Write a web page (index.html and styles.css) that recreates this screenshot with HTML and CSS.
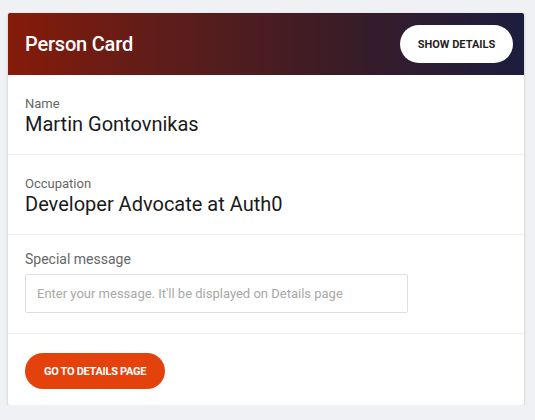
FILE: index.html
```html
<!DOCTYPE html>
<html>
<head>
<meta charset="utf-8">
<link rel="stylesheet" href="styles.css">
</head>
<body>
<div class="card">
  <div class="card-header">
    <h1 class="card-title">Person Card</h1>
    <button class="btn-light">SHOW DETAILS</button>
  </div>
  <div class="section">
    <div class="label">Name</div>
    <div class="value">Martin Gontovnikas</div>
  </div>
  <div class="section">
    <div class="label">Occupation</div>
    <div class="value">Developer Advocate at Auth0</div>
  </div>
  <div class="section section-message">
    <label class="label label-lg">Special message</label>
    <input class="input" type="text" placeholder="Enter your message. It'll be displayed on Details page">
  </div>
  <div class="footer">
    <button class="btn-primary">GO TO DETAILS PAGE</button>
  </div>
</div>
</body>
</html>
```
FILE: styles.css
```css
* { box-sizing: border-box; }
html, body { margin: 0; padding: 0; }
body {
  background: #eff1f4;
  font-family: Roboto, "Liberation Sans", Arial, sans-serif;
  padding: 13px 11px 0 8px;
}
.card {
  width: 516px;
  background: #fff;
  border-radius: 2px;
  box-shadow: 0 1px 3px rgba(0,0,0,0.22);
  overflow: hidden;
}
.card-header {
  height: 62px;
  display: flex;
  align-items: center;
  justify-content: space-between;
  padding: 0 11px 0 17px;
  background: linear-gradient(90deg, #861b09 0%, #5e1d1a 30%, #3a1c27 65%, #1c1d3e 100%);
}
.card-title {
  margin: 0;
  color: #fff;
  font-size: 20px;
  font-weight: 500;
  letter-spacing: -0.2px;
}
.btn-light {
  height: 38px;
  width: 113px;
  border: none;
  border-radius: 19px;
  background: #fff;
  color: #1f1f1f;
  font-family: Roboto, "Liberation Sans", Arial, sans-serif;
  font-size: 11px;
  font-weight: 700;
  padding: 0;
}
.section {
  padding: 21px 17px 18px;
  border-bottom: 1px solid #f1f1f1;
}
.label {
  display: block;
  font-size: 13px;
  line-height: 16px;
  color: #666;
}
.value {
  font-size: 20px;
  line-height: 24px;
  color: #1a1a1a;
}
.section-message {
  padding: 15px 17px 20px;
}
.label-lg {
  font-size: 14px;
  line-height: 18px;
  margin-bottom: 6px;
}
.input {
  display: block;
  width: 383px;
  height: 39px;
  border: 1px solid #dedede;
  border-radius: 2px;
  padding: 0 11px;
  font-family: Roboto, "Liberation Sans", Arial, sans-serif;
  font-size: 13px;
  color: #333;
  outline: none;
}
.input::placeholder { color: #a8a8a8; }
.footer {
  padding: 19px 17px 16px;
}
.btn-primary {
  height: 36px;
  width: 140px;
  border: none;
  border-radius: 18px;
  background: #e4420c;
  color: #fff;
  font-family: Roboto, "Liberation Sans", Arial, sans-serif;
  font-size: 11px;
  font-weight: 700;
  letter-spacing: -0.3px;
  padding: 0;
}
```
